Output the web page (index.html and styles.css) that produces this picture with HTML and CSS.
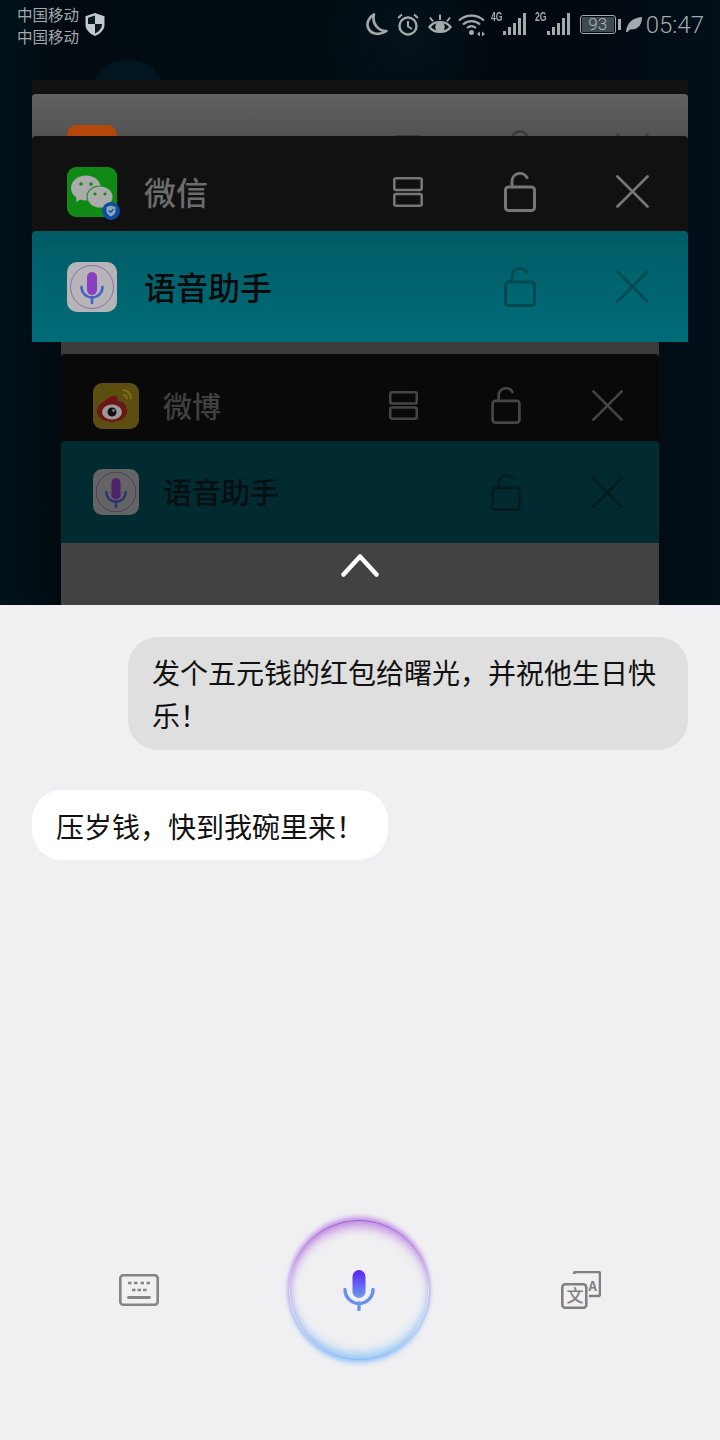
FILE: index.html
```html
<!DOCTYPE html>
<html lang="zh-CN">
<head>
    <meta charset="UTF-8">
    <meta name="viewport" content="width=device-width, initial-scale=1.0">
    <title>语音助手</title>
    <link rel="stylesheet" href="styles.css">
</head>

<body>

<svg class="defs" width="0" height="0">
    <symbol id="split" viewBox="0 0 30 30">
        <rect x="1.300" y="1.300" width="27.400" height="11.700" rx="2" fill="none" stroke="currentColor" stroke-width="2.600"/>
        <rect x="1.300" y="17" width="27.400" height="11.700" rx="2" fill="none" stroke="currentColor" stroke-width="2.600"/>
    </symbol>
    <symbol id="lock" viewBox="0 0 32 40">
        <rect x="1.500" y="15" width="29" height="23.500" rx="3" fill="none" stroke="currentColor" stroke-width="3"/>
        <path d="M8 15V9.500a8 8 0 0 1 15-4" fill="none" stroke="currentColor" stroke-width="3" stroke-linecap="round"/>
    </symbol>
    <symbol id="close" viewBox="0 0 34 34">
        <path d="M1.500 1.500l31 31M32.500 1.500l-31 31" fill="none" stroke="currentColor" stroke-width="2.800" stroke-linecap="round"/>
    </symbol>
    <symbol id="voice" viewBox="0 0 50 50">
        <rect width="50" height="50" rx="10" fill="#b6b6b8"/>
        <circle cx="25" cy="25" r="21.500" fill="none" stroke="#7d4bb0" stroke-width=".7"/>
        <rect x="20" y="10" width="10" height="23" rx="5" fill="#8a3fc0"/>
        <path d="M14.500 25a10.500 10.500 0 0 0 21 0" fill="none" stroke="#4d5fc4" stroke-width="2.600" stroke-linecap="round"/>
        <path d="M25 35v6" stroke="#4d5fc4" stroke-width="2.600" stroke-linecap="round"/>
    </symbol>
    <symbol id="bars" viewBox="0 0 23 22">
        <rect x="0" y="18" width="3" height="4" fill="currentColor"/>
        <rect x="5" y="14" width="3" height="8" fill="currentColor"/>
        <rect x="10" y="10" width="3" height="12" fill="currentColor"/>
        <rect x="15" y="5" width="3" height="17" fill="currentColor"/>
        <rect x="20" y="0" width="3" height="22" fill="currentColor"/>
    </symbol>
</svg>

<div class="recents">
    <div class="status-bar">
        <div class="status-left">
            <div class="carriers">
                <span>中国移动</span>
                <span>中国移动</span>
            </div>
            <svg class="shield" width="20" height="23" viewBox="0 0 20 23">
                <path d="M10 0l9.500 3.200v8.300c0 5.200-4 9.300-9.500 11.500C4.500 20.800.5 16.700.5 11.500V3.200z" fill="#c4c9cc"/>
                <path d="M10 2.500L3 4.800v6.200h7zM10 11v9.500c3.800-1.800 7-4.900 7-9.500z" fill="#0a1a22"/>
            </svg>
        </div>
        <div class="status-right">
            <svg width="22" height="23" viewBox="0 0 22 23">
                <path d="M8 1.500C2.500 4.500.5 10 2 14.500c2 6 10.500 9 18.500 3.500C13 18.500 5.500 11 8 1.500z" fill="none" stroke="currentColor" stroke-width="2.600" stroke-linejoin="round"/>
            </svg>
            <svg class="gap-9" width="22" height="23" viewBox="0 0 22 23">
                <circle cx="11" cy="13" r="8.500" fill="none" stroke="currentColor" stroke-width="2.400"/>
                <path d="M11 8v5.500l4 2.500M1 5l4-3.500M21 5l-4-3.500" fill="none" stroke="currentColor" stroke-width="2"/>
            </svg>
            <svg class="gap-9" width="24" height="21" viewBox="0 0 24 21">
                <path d="M1.500 13C6 6.500 18 6.500 22.500 13 18 19.500 6 19.500 1.500 13z" fill="none" stroke="currentColor" stroke-width="2.400"/>
                <circle cx="12" cy="13" r="4.800" fill="currentColor"/>
                <path d="M5 7.500L2 3.500M12 6V.5M19 7.500l3-4" stroke="currentColor" stroke-width="2"/>
            </svg>
            <svg class="gap-6" width="27" height="23" viewBox="0 0 27 23">
                <path d="M1 7.500c7-6.500 18-6.500 25 0M5 11.500c5-4.500 12-4.500 17 0M9 15c2.800-2.300 6.200-2.300 9 0" fill="none" stroke="currentColor" stroke-width="2.200"/>
                <circle cx="13.500" cy="19.500" r="2.500" fill="currentColor"/>
                <path d="M19 21l3-2.500v5zM27 21l-3-2.500v5z" fill="currentColor"/>
            </svg>
            <span class="net net-first">4G</span>
            <svg class="signal" width="23" height="22"><use href="#bars"/></svg>
            <span class="net net-second">2G</span>
            <svg class="signal" width="23" height="22"><use href="#bars"/></svg>
            <div class="battery"><span>93</span></div>
            <span class="battery-nub"></span>
            <svg class="leaf" width="16" height="15" viewBox="0 0 16 15">
                <path d="M0 15C1 6 6 1 16 0c0 8-4 13-12 12.500L1.500 15z" fill="currentColor"/>
            </svg>
            <span class="clock">05:47</span>
        </div>
    </div>

    <div class="glow"></div>

    <!-- 前面一组卡片 -->
    <div class="card-shadow"></div>

    <div class="card card-grey">
        <div class="app-icon app-orange"></div>
        <div class="card-actions">
            <svg class="act-split"><use href="#split"/></svg>
            <svg class="act-lock"><use href="#lock"/></svg>
            <svg class="act-close"><use href="#close"/></svg>
        </div>
    </div>

    <div class="card card-dark">
        <svg class="app-icon" viewBox="0 0 50 50">
            <rect width="50" height="50" rx="9" fill="#0f8a17"/>
            <ellipse cx="19" cy="21" rx="15" ry="12.500" fill="#ababab"/>
            <path d="M9 29l.5 6 6-4z" fill="#ababab"/>
            <ellipse cx="33" cy="30" rx="13.500" ry="11.500" fill="#0f8a17"/>
            <ellipse cx="33" cy="30" rx="12.500" ry="10.500" fill="#ababab"/>
            <circle cx="14" cy="17" r="1.800" fill="#0f8a17"/>
            <circle cx="24" cy="17" r="1.800" fill="#0f8a17"/>
            <circle cx="28" cy="27" r="1.600" fill="#0f8a17"/>
            <circle cx="38" cy="27" r="1.600" fill="#0f8a17"/>
        </svg>
        <svg class="badge" width="18" height="18" viewBox="0 0 18 18">
            <circle cx="9" cy="9" r="9" fill="#0d4f9c"/>
            <path d="M9 3.500l4.500 1.500v4c0 2.500-2 4.300-4.500 5.500-2.500-1.200-4.500-3-4.500-5.500V5z" fill="#8fa6bd"/>
            <path d="M6.800 8.500l1.700 1.800 3-3" fill="none" stroke="#0d4f9c" stroke-width="1.300"/>
        </svg>
        <span class="card-title">微信</span>
        <div class="card-actions">
            <svg class="act-split"><use href="#split"/></svg>
            <svg class="act-lock"><use href="#lock"/></svg>
            <svg class="act-close"><use href="#close"/></svg>
        </div>
    </div>

    <div class="card card-teal">
        <svg class="app-icon"><use href="#voice"/></svg>
        <span class="card-title">语音助手</span>
        <div class="card-actions">
            <span class="act-split"></span>
            <svg class="act-lock"><use href="#lock"/></svg>
            <svg class="act-close"><use href="#close"/></svg>
        </div>
    </div>

    <!-- 后面一组卡片，整体缩小 -->
    <div class="card card-back card-back-grey">
        <div class="app-icon app-orange"></div>
        <div class="card-actions">
            <svg class="act-split"><use href="#split"/></svg>
            <svg class="act-lock"><use href="#lock"/></svg>
            <svg class="act-close"><use href="#close"/></svg>
        </div>
    </div>

    <div class="card card-back card-back-dark">
        <svg class="app-icon" viewBox="0 0 46 46">
            <rect width="46" height="46" rx="9" fill="#5c4d10"/>
            <ellipse cx="19" cy="28" rx="15" ry="11" fill="#6d1616"/>
            <path d="M8 24c3-7 10-12 15-11 3 1 2 4 1 6 5-1 9 1 9 5" fill="#6d1616"/>
            <ellipse cx="19" cy="29" rx="10" ry="7.500" fill="#9a9a9a"/>
            <circle cx="19" cy="29" r="4.500" fill="#111"/>
            <circle cx="20.500" cy="27.500" r="1.200" fill="#9a9a9a"/>
            <path d="M30 7c4 0 8 3 8 9M30 12c2 0 4 1.500 4 4" fill="none" stroke="#86700f" stroke-width="2"/>
        </svg>
        <span class="card-title">微博</span>
        <div class="card-actions">
            <svg class="act-split"><use href="#split"/></svg>
            <svg class="act-lock"><use href="#lock"/></svg>
            <svg class="act-close"><use href="#close"/></svg>
        </div>
    </div>

    <div class="card card-back card-back-teal">
        <svg class="app-icon"><use href="#voice"/></svg>
        <span class="card-title">语音助手</span>
        <div class="card-actions">
            <span class="act-split"></span>
            <svg class="act-lock"><use href="#lock"/></svg>
            <svg class="act-close"><use href="#close"/></svg>
        </div>
    </div>

    <div class="card-rest">
        <svg width="38" height="23" viewBox="0 0 38 23">
            <path d="M2.500 20.500L19 2.500l16.500 18" fill="none" stroke="#fff" stroke-width="4.500" stroke-linecap="round" stroke-linejoin="round"/>
        </svg>
    </div>
</div>

<div class="panel">
    <div class="bubble bubble-user">发个五元钱的红包给曙光，并祝他生日快乐！</div>
    <div class="bubble bubble-reply">压岁钱，快到我碗里来！</div>

    <div class="controls">
        <svg width="40" height="32" viewBox="0 0 40 32">
            <rect x="1.300" y="1.300" width="37.400" height="29.400" rx="3" fill="none" stroke="#858585" stroke-width="2.600"/>
            <path d="M9 9h3.500M15 9h3.500M21.500 9H25M27.500 9H31M13 16h3.500M18.500 16H22M24 16h3.500" stroke="#858585" stroke-width="2.400"/>
            <path d="M9.500 23.500h21" stroke="#858585" stroke-width="2.800" stroke-linecap="round"/>
        </svg>
        <div class="mic-button">
            <div class="mic-ring"></div>
            <svg class="mic" width="32" height="41" viewBox="0 0 32 41">
                <defs>
                    <linearGradient id="micFill" x1="0" y1="0" x2="0" y2="1">
                        <stop offset="0" stop-color="#5a22f6"/>
                        <stop offset="1" stop-color="#6d9cf0"/>
                    </linearGradient>
                </defs>
                <rect x="9.500" y="0" width="13" height="28" rx="6.500" fill="url(#micFill)"/>
                <path d="M2 19.500a14 14 0 0 0 28 0" fill="none" stroke="#6a8df0" stroke-width="3.400" stroke-linecap="round"/>
                <path d="M16 33v6.500" stroke="#6a96f0" stroke-width="3.400" stroke-linecap="round"/>
            </svg>
        </div>
        <svg class="translate" width="40" height="38" viewBox="0 0 40 38">
            <path d="M13 3a2 2 0 0 1 2-2h22a2 2 0 0 1 2 2v20a2 2 0 0 1-2 2H28" fill="none" stroke="#808080" stroke-width="2.600"/>
            <rect x="1.300" y="13.300" width="24" height="23.400" rx="3" fill="#f0f0f2" stroke="#808080" stroke-width="2.600"/>
            <text x="5.500" y="31" class="translate-zh">文</text>
            <text x="27.500" y="20" class="translate-en">A</text>
        </svg>
    </div>
</div>

</body>
</html>
```

FILE: styles.css
```css
* {
    box-sizing: border-box;
}

body {
    margin: 0;
    width: 720px;
    height: 1440px;
    overflow: hidden;
    font-family: "Noto Sans CJK SC", "Liberation Sans", sans-serif;
    background: #f0f0f2;
}

.defs {
    position: absolute;
}

/* 多任务背景 */
.recents {
    position: relative;
    height: 605px;
    overflow: hidden;
    background:
        radial-gradient(circle at 410px 40px, rgba(15, 40, 50, .3), transparent 90px),
        linear-gradient(90deg, #02131a 0, #010a11 60px, #010c13 300px, #01070e 560px, #02101a 720px);
}

.glow {
    position: absolute;
    left: 92px;
    top: 60px;
    width: 72px;
    height: 60px;
    border-radius: 50%;
    background: #01161f;
}

.status-bar {
    position: relative;
    z-index: 2;
    display: flex;
    justify-content: space-between;
    height: 48px;
    padding: 3px 16px 0 17px;
    color: #a4a9ac;
}

.status-left {
    display: flex;
    align-items: flex-start;
    gap: 6px;
}

.carriers {
    display: flex;
    flex-direction: column;
    font-size: 15.500px;
    line-height: 22px;
}

.shield {
    margin-top: 10px;
}

.status-right {
    display: flex;
    align-items: center;
    height: 42px;
}

.gap-9 {
    margin-left: 9px;
}

.gap-6 {
    margin-left: 6px;
}

.net {
    align-self: flex-start;
    margin-top: 9px;
    width: 12px;
    font: bold 12px/11px "Liberation Sans", sans-serif;
    transform: scaleX(.72);
    transform-origin: left;
}

.net-first {
    margin-left: 6px;
}

.net-second {
    margin-left: 9px;
}

.battery {
    display: flex;
    width: 36px;
    height: 19px;
    margin-left: 10px;
    padding: 1px;
    border: 1px solid #a4a9ac;
    border-radius: 3px;
}

.battery span {
    flex: 1;
    background: #3d4a50;
    font-size: 17px;
    line-height: 15px;
    text-align: center;
    font-family: Roboto, sans-serif;
    font-weight: 300;
    color: #b4b9bc;
}

.battery-nub {
    width: 3px;
    height: 11px;
    margin-left: 2px;
    background: #a4a9ac;
}

.leaf {
    margin-left: 5px;
}

.clock {
    margin-left: 4px;
    padding-top: 2px;
    font-family: Roboto, sans-serif;
    font-weight: 300;
    font-size: 24px;
    line-height: 28px;
}

/* 卡片 */
.card-shadow {
    position: absolute;
    left: 32px;
    top: 80px;
    width: 656px;
    height: 40px;
    border-radius: 4px 4px 0 0;
    background: #111;
}

.card {
    position: absolute;
    left: 32px;
    width: 656px;
    height: 111px;
    display: flex;
    align-items: center;
    padding-left: 35px;
    border-radius: 4px 4px 0 0;
}

.app-icon {
    flex: none;
    width: 50px;
    height: 50px;
}

.app-orange {
    border-radius: 10px;
    background: linear-gradient(#b84a08, #a03a14);
}

.card-title {
    margin-left: 27px;
    margin-top: -2px;
    font-size: 32px;
    font-weight: 500;
    line-height: 40px;
    white-space: nowrap;
}

.card-actions {
    position: absolute;
    top: 0;
    right: 39px;
    bottom: 0;
    display: flex;
    align-items: center;
}

.act-split {
    width: 30px;
    height: 30px;
}

.act-lock {
    width: 32px;
    height: 40px;
    margin-left: 81px;
}

.act-close {
    width: 33px;
    height: 33px;
    margin-left: 80px;
}

.card-grey {
    top: 94px;
    background: linear-gradient(#616161, #525252 42px);
    color: #3d3d3d;
}

.card-dark {
    top: 136px;
    background: #111;
    color: #767676;
}

.card-dark .card-title {
    color: #6c6c6c;
}

.badge {
    position: absolute;
    left: 70px;
    top: 66px;
}

.card-teal {
    top: 231px;
    background: linear-gradient(#005c66, #006c78);
    color: #024a53;
    z-index: 1;
}

.card-teal .card-title {
    color: #060a0b;
}

/* 后面一组 */
.card-back {
    left: 61px;
    width: 598px;
    height: 102px;
    padding-left: 32px;
}

.card-back .app-icon {
    width: 46px;
    height: 46px;
}

.card-back .card-title {
    margin-left: 24px;
    font-size: 29px;
}

.card-back .card-actions {
    right: 36px;
}

.card-back .act-split {
    width: 29px;
    height: 29px;
}

.card-back .act-lock {
    width: 30px;
    height: 37px;
    margin-left: 73px;
}

.card-back .act-close {
    width: 31px;
    height: 31px;
    margin-left: 71px;
}

.card-back-grey {
    top: 333px;
    background: #3b3b3b;
    color: #262626;
}

.card-back-grey .app-orange {
    background: #7c2a06;
}

.card-back-dark {
    top: 354px;
    height: 103px;
    background: #090909;
    color: #454545;
}

.card-back-dark .card-title {
    color: #404040;
}

.card-back-teal {
    top: 441px;
    background: #022b31;
    color: #021b1f;
}

.card-back-teal .card-title {
    color: #030f11;
}

.card-back-teal .app-icon {
    filter: brightness(.55);
}

.card-rest {
    position: absolute;
    left: 61px;
    top: 543px;
    width: 598px;
    height: 62px;
    display: flex;
    justify-content: center;
    padding-top: 11px;
    background: #424242;
}

/* 对话面板 */
.panel {
    height: 835px;
    display: flex;
    flex-direction: column;
    align-items: flex-start;
    gap: 40px;
    padding: 32px 32px 80px;
    background: #f0f0f2;
}

.bubble {
    padding: 14px 24px 13px;
    border-radius: 30px;
    font-size: 28px;
    line-height: 43px;
    color: #111;
}

.bubble-user {
    align-self: flex-end;
    width: 560px;
    background: #dfdfdf;
}

.bubble-reply {
    padding: 15px 24px 12px;
    background: #fff;
}

.controls {
    align-self: stretch;
    display: flex;
    align-items: center;
    margin-top: auto;
    padding-left: 87px;
    gap: 130px;
}

.mic-button {
    position: relative;
    width: 140px;
    height: 140px;
    display: flex;
    align-items: center;
    justify-content: center;
    border-radius: 50%;
    box-shadow:
        0 -3px 5px rgba(170, 80, 220, .6),
        0 3px 5px rgba(100, 175, 250, .6),
        inset 0 10px 11px -4px rgba(170, 90, 220, .7),
        inset 4px 0 8px -3px rgba(180, 130, 230, .45),
        inset 0 -10px 11px -4px rgba(110, 185, 250, .7),
        inset -2px 0 6px -2px rgba(190, 210, 245, .35);
}

.mic-ring {
    position: absolute;
    inset: 0;
    border-radius: 50%;
    background: linear-gradient(#a45ad6 0, #c39be6 25%, #ebe6f6 50%, #d8ebfb 75%, #7fbcf9 100%);
    -webkit-mask: radial-gradient(circle, transparent 68.500px, #000 69.500px);
    mask: radial-gradient(circle, transparent 68.500px, #000 69.500px);
}

.mic {
    position: relative;
}

.translate {
    margin-left: 2px;
}

.translate-zh {
    font-size: 17px;
    font-weight: 500;
    fill: #808080;
}

.translate-en {
    font-size: 13px;
    font-weight: 700;
    fill: #808080;
}
```
